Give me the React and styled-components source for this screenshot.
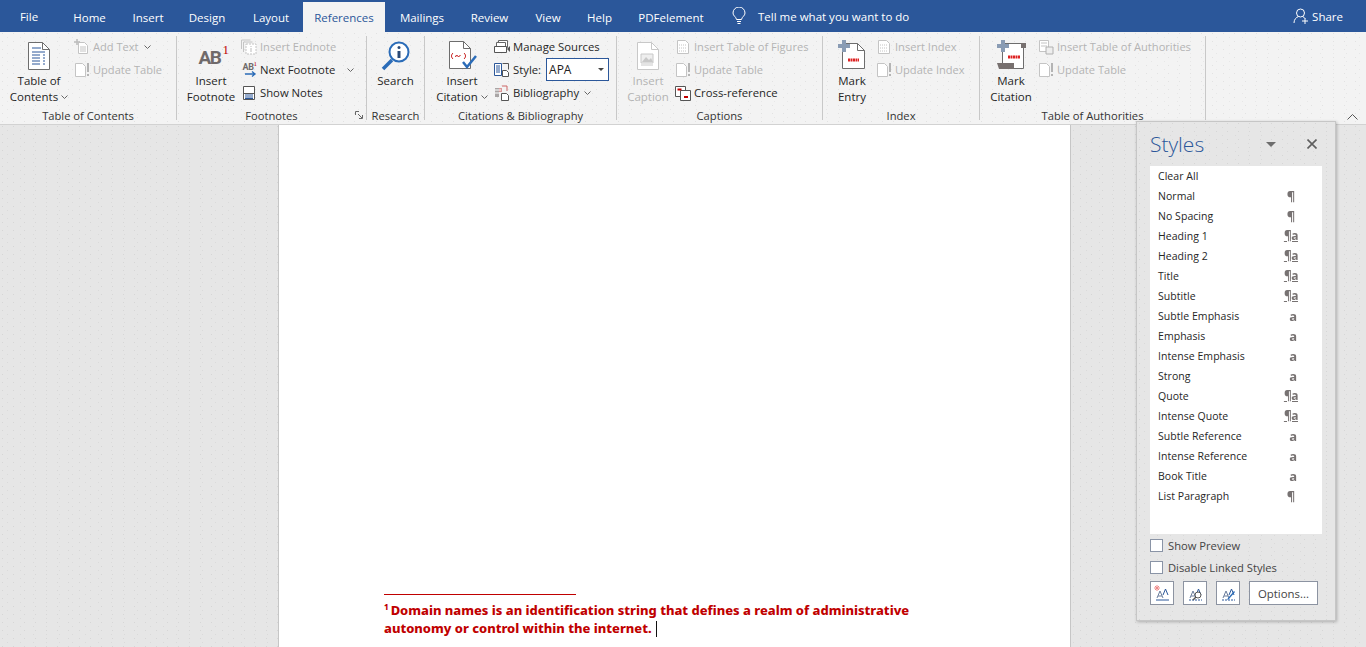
import React from 'react';
import styled, { createGlobalStyle, css } from 'styled-components';

const GlobalStyle = createGlobalStyle`
  html, body {
    margin: 0;
    padding: 0;
    height: 100%;
    overflow: hidden;
    background: #e6e6e6;
  }
  * { box-sizing: border-box; }
  #root { height: 100%; }
`;

// the grainy dots that sit on the grey areas of the screenshot
const dots = css`
  background-image:
    radial-gradient(circle at 0.5px 0.5px, rgba(0, 0, 0, 0.07) 0.7px, transparent 0.8px),
    radial-gradient(circle at 0.5px 0.5px, rgba(0, 0, 0, 0.05) 0.7px, transparent 0.8px);
  background-size: 11px 8px, 13px 8px;
  background-position: 2px 1px, 7px 5px;
`;

const Shell = styled.div`
  position: relative;
  width: 1366px;
  height: 647px;
  overflow: hidden;
  display: flex;
  flex-direction: column;
  font-family: "Open Sans", "Liberation Sans", sans-serif;
  font-size: 11.5px;
  color: #262626;
`;

const TitleBar = styled.div`
  height: 32px;
  background: #2b579a;
  display: flex;
  align-items: flex-end;
  color: #fff;
  flex: none;
`;

const Tab = styled.div`
  width: ${p => p.$w}px;
  height: ${p => (p.$active ? 30 : 32)}px;
  display: flex;
  align-items: center;
  justify-content: center;
  background: ${p => (p.$active ? '#f3f3f3' : 'transparent')};
  color: ${p => (p.$active ? '#2b579a' : '#fff')};
  padding-top: ${p => (p.$active ? 1 : p.$raised ? 1 : 3)}px;
`;

const TellMe = styled.div`
  height: 32px;
  margin-left: 13px;
  display: flex;
  align-items: center;
  gap: 12px;
`;

const ShareBox = styled.div`
  height: 32px;
  margin-left: auto;
  margin-right: 23px;
  display: flex;
  align-items: center;
  gap: 3px;
`;

const Ribbon = styled.div`
  height: 93px;
  flex: none;
  position: relative;
  display: flex;
  background-color: #f3f3f3;
  ${dots}
  border-bottom: 1px solid #d2d2d2;
  padding-top: 4px;
`;

const Group = styled.div`
  width: ${p => p.$w}px;
  height: 84px;
  display: flex;
  flex-direction: column;
  border-right: 1px solid #c8c8c8;
  flex: none;
`;

const GroupBody = styled.div`
  flex: 1;
  display: flex;
  padding-left: ${p => p.$left || 0}px;
  min-height: 0;
`;

const GroupLabel = styled.div`
  height: 15px;
  line-height: 15px;
  margin-bottom: -3px;
  text-align: center;
  font-size: 11.2px;
  color: #333;
  position: relative;
  white-space: nowrap;
`;

const Launcher = styled.svg`
  position: absolute;
  right: 3px;
  top: 3px;
`;

const LargeButton = styled.div`
  width: ${p => p.$w}px;
  display: flex;
  flex-direction: column;
  align-items: center;
  flex: none;
  color: ${p => (p.$off ? '#b4b4b4' : '#262626')};
`;

const LargeIcon = styled.div`
  height: 33px;
  margin-top: 3px;
  display: flex;
  align-items: center;
  justify-content: center;
`;

const LargeText = styled.div`
  text-align: center;
  line-height: 16px;
  margin-top: 1px;
  white-space: nowrap;
`;

const SmallColumn = styled.div`
  display: flex;
  flex-direction: column;
  margin-left: ${p => p.$left || 0}px;
  flex: none;
`;

const SmallRow = styled.div`
  height: 23px;
  display: flex;
  align-items: center;
  gap: 3px;
  white-space: nowrap;
  padding-bottom: 2px;
  font-size: ${p => (p.$off ? 11.1 : 11.3)}px;
  color: ${p => (p.$off ? '#b4b4b4' : '#262626')};
`;

const SmallIcon = styled.div`
  position: relative;
  width: 16px;
  height: 16px;
  flex: none;
  display: flex;
  align-items: center;
  justify-content: center;
`;

const Combo = styled.div`
  width: 63px;
  height: 23px;
  margin-left: 2px;
  background: #fff;
  border: 1px solid #2b579a;
  display: flex;
  align-items: center;
  justify-content: space-between;
  padding: 0 4px 0 2px;
  font-size: 12px;
  color: #222;
`;

const ComboArrow = styled.span`
  width: 0;
  height: 0;
  border-left: 3px solid transparent;
  border-right: 3px solid transparent;
  border-top: 3px solid #444;
`;

const ChevronMark = styled.svg`
  margin-left: ${p => p.$left ?? 3}px;
  vertical-align: 2px;
  flex: none;
`;

const Collapse = styled.svg`
  position: absolute;
  right: 8px;
  bottom: 4px;
`;

// letters inside the footnote buttons, kept as real text
const FootnoteLetters = styled.span`
  position: relative;
  display: inline-block;
  font-family: Roboto, "Open Sans", sans-serif;
  font-weight: 700;
  font-size: ${p => (p.$small ? 9 : 19)}px;
  line-height: 1;
  letter-spacing: ${p => (p.$small ? -0.5 : -1.5)}px;
  color: #6f6a6a;
  margin-top: ${p => (p.$small ? -4 : 4)}px;
  margin-right: ${p => (p.$small ? 2 : 3)}px;
`;

const FootnoteDigit = styled.span`
  position: absolute;
  left: calc(100% + ${p => (p.$small ? 0 : 2)}px);
  top: ${p => (p.$small ? -2 : -5)}px;
  font-family: "Liberation Serif", serif;
  font-weight: 400;
  letter-spacing: 0;
  font-size: ${p => (p.$small ? 7 : 13)}px;
  color: #c00000;
`;

const NextArrowMark = styled.svg`
  position: absolute;
  left: 4px;
  top: 9px;
`;

const Workspace = styled.div`
  flex: 1;
  min-height: 0;
  background-color: #e6e6e6;
  ${dots}
  padding-left: 278px;
`;

const Page = styled.div`
  width: 793px;
  height: 100%;
  background: #fff;
  border-left: 1px solid #c6c6c6;
  border-right: 1px solid #c6c6c6;
  padding: 0 105px 10px;
  display: flex;
  flex-direction: column;
  justify-content: flex-end;
`;

const FootRule = styled.div`
  width: 192px;
  height: 1px;
  background: #c00000;
  margin-bottom: 6px;
`;

const FootLine = styled.div`
  color: #c00000;
  font-family: "Noto Sans", "Open Sans", sans-serif;
  font-weight: 800;
  font-size: 12.95px;
  line-height: 18px;
  white-space: nowrap;
`;

const Sup = styled.sup`
  font-size: 8px;
  line-height: 0;
  margin-right: 2px;
`;

const Caret = styled.span`
  display: inline-block;
  width: 1px;
  height: 16px;
  background: #111;
  margin-left: 4px;
  vertical-align: -4px;
`;

const Pane = styled.aside`
  position: absolute;
  left: 1136px;
  top: 121px;
  width: 200px;
  height: 500px;
  background-color: #e6e6e6;
  ${dots}
  border: 1px solid #c6c6c6;
  box-shadow: 1px 1px 3px rgba(0, 0, 0, 0.25);
  padding: 0 13px;
  display: flex;
  flex-direction: column;
`;

const PaneHeader = styled.div`
  height: 44px;
  display: flex;
  align-items: center;
  color: #2b579a;
  font-size: 21px;
  font-weight: 300;
  padding-right: 5px;
  flex: none;
`;

const PaneTitle = styled.div`
  flex: 1;
`;

const PaneMenu = styled.span`
  width: 0;
  height: 0;
  border-left: 5px solid transparent;
  border-right: 5px solid transparent;
  border-top: 5px solid #6d6d6d;
  margin-right: 31px;
`;

const StyleList = styled.div`
  width: 172px;
  height: 368px;
  background: #fff;
  flex: none;
`;

const StyleRow = styled.div`
  height: 20px;
  display: flex;
  align-items: center;
  justify-content: space-between;
  padding: 0 24px 0 8px;
  font-size: 10.5px;
  letter-spacing: 0.05px;
  color: #262626;
`;

const StyleMark = styled.span`
  width: 14px;
  display: flex;
  justify-content: ${p => (p.$para ? 'center' : 'flex-end')};
  padding-right: ${p => (p.$single ? 1 : 0)}px;
  font-size: ${p => (p.$para || p.$single ? 13 : 12)}px;
  font-weight: 700;
  line-height: 1;
  letter-spacing: ${p => (p.$para || p.$single ? 0 : -0.5)}px;
  color: #777272;
  text-decoration: ${p => (p.$under ? 'underline' : 'none')};
  will-change: transform;
`;

const CheckRow = styled.div`
  height: 22px;
  display: flex;
  align-items: center;
  gap: 5px;
  font-size: 11.2px;
  color: #444;
  flex: none;
`;

const CheckBox = styled.span`
  width: 13px;
  height: 13px;
  background: #fff;
  border: 1px solid #8a94a6;
  flex: none;
`;

const PaneFooter = styled.div`
  display: flex;
  gap: 9px;
  margin-top: 3px;
`;

const PaneButton = styled.div`
  width: ${p => p.$w || 24}px;
  height: 24px;
  background: #fff;
  border: 1px solid #8c93a1;
  display: flex;
  align-items: center;
  justify-content: center;
  font-size: 11.4px;
  color: #444;
`;

const Svg = ({ w = 16, h = 16, children }) => (
  <svg width={w} height={h} viewBox={`0 0 ${w} ${h}`} fill="none">{children}</svg>
);

const Chevron = ({ left }) => (
  <ChevronMark $left={left} width="7" height="4" viewBox="0 0 7 4" fill="none">
    <path d="M.5.5l3 3 3-3" stroke="#666" />
  </ChevronMark>
);

const DocAlert = () => (
  <Svg>
    <path d="M1.500 1.500h7l3 3v10h-10z" stroke="#c4c4c4" fill="#fff" />
    <path d="M14 1v9M14 12v2" stroke="#b4b4b4" strokeWidth="2" />
  </Svg>
);

const LargeDoc = ({ children, x = 5, stroke = '#6d6d6d' }) => (
  <Svg w={32} h={32}>
    <path d={`M${x + .5} 2.500h14l7 7v20h-21z`} stroke={stroke} fill="#fff" />
    <path d={`M${x + 14.5} 2.500v7h7`} stroke={stroke} />
    {children}
  </Svg>
);

const TocIcon = () => (
  <LargeDoc>
    <path d="M9 8h9" stroke="#2b579a" />
    <path d="M9 12h13M9 15h8M20 15h2M9 18h8M20 18h2M9 21h8M20 21h2M9 24h8M20 24h2" stroke="#2b579a" />
  </LargeDoc>
);

const NextArrow = () => (
  <NextArrowMark width="12" height="6" viewBox="0 0 12 6" fill="none">
    <path d="M0 3h10M7 .5L10 3 7 5.500" stroke="#2b6cb8" strokeWidth="1.300" />
  </NextArrowMark>
);

const ShowNotesIcon = () => (
  <Svg>
    <path d="M2.500 1.500h11v13h-11z" stroke="#555" fill="#fff" />
    <path d="M2.500 8.500h11" stroke="#555" />
    <path d="M4 10h8M4 12h8M4 13.500h8" stroke="#2b579a" />
  </Svg>
);

const SearchIcon = () => (
  <Svg w={32} h={32}>
    <circle cx="19" cy="12" r="9.500" stroke="#2b6cb8" strokeWidth="2" fill="#fff" />
    <path d="M12 20L3 29" stroke="#2b6cb8" strokeWidth="3.500" />
    <circle cx="19" cy="7.500" r="1.500" fill="#2b4a77" />
    <path d="M19 11v7" stroke="#2b4a77" strokeWidth="3" />
  </Svg>
);

const CitationIcon = () => (
  <Svg w={32} h={32}>
    <path d="M3.500 1.500h14l7 7v20h-21z" stroke="#6d6d6d" fill="#fff" />
    <path d="M17.500 1.500v7h7" stroke="#6d6d6d" />
    <path d="M7 13c-2 2-2 4 0 6M18 13c2 2 2 4 0 6" stroke="#c00000" />
    <path d="M9 16.500l2-1 1.500 1 2-1" stroke="#c00000" />
    <path d="M17 22l4 5 9-11" stroke="#2b6cb8" strokeWidth="2.500" />
  </Svg>
);

const SourcesIcon = () => (
  <Svg>
    <path d="M4.500 1.500h9v7h-9z" stroke="#666" fill="#fff" />
    <path d="M2.500 3.500h9v7h-9z" stroke="#666" fill="#fff" />
    <path d="M.5 7.500h12v6H.5z" stroke="#555" fill="#fff" />
    <path d="M13 10l3-3v6z" fill="#555" />
  </Svg>
);

const StyleIcon = () => (
  <Svg>
    <path d="M.5 1.500h7v12h-7z" stroke="#2b579a" fill="#fff" />
    <path d="M2 4h4M2 6h4M2 8h4M2 10h4" stroke="#2b579a" />
    <path d="M8.500 1.500h6v6" stroke="#555" />
    <path d="M8.500 8.500h4l2 2v4h-6z" stroke="#555" fill="#fff" />
  </Svg>
);

const BibliographyIcon = () => (
  <Svg>
    <path d="M1 3h4v9H1z" fill="#a9a5a5" />
    <path d="M5 3h3v4H5z" fill="#d99" />
    <path d="M1 5h6M1 8h4" stroke="#fff" />
    <path d="M8 1h5v5" stroke="#c66" />
    <path d="M7.500 8.500h5l2 2v5h-7z" stroke="#555" fill="#fff" />
  </Svg>
);

const CaptionIcon = () => (
  <LargeDoc stroke="#c8c8c8">
    <path d="M9 14h12v9H9z" stroke="#c8c8c8" fill="#eee" />
    <path d="M10 22l4-5 3 3 2-2 2 4z" fill="#c8c8c8" />
    <path d="M9 25h12" stroke="#c8c8c8" />
  </LargeDoc>
);

const CrossRefIcon = () => (
  <Svg>
    <path d="M.5 1.500h10v10H.5z" stroke="#555" fill="#fff" />
    <path d="M5.500 5.500h10v10h-10z" stroke="#555" fill="#fff" />
    <path d="M2.500 4.500h4" stroke="#c00000" strokeWidth="2" />
    <path d="M9 12h4" stroke="#c00000" strokeWidth="2" />
  </Svg>
);

const MarkEntryIcon = () => (
  <Svg w={32} h={32}>
    <path d="M6.500 3.500h15l7 7v18h-22z" stroke="#6d6d6d" fill="#fff" />
    <path d="M21.500 3.500v7h7" stroke="#6d6d6d" />
    <path d="M6 0h4v4h4v4h-4v4H6V8H2V4h4z" fill="#8a9cb4" />
    <path d="M12 20h11" stroke="#d22" strokeWidth="3" strokeDasharray="2 .5" />
  </Svg>
);

const MarkCitationIcon = () => (
  <Svg w={32} h={32}>
    <path d="M7.500 3.500h21v25h-21z" stroke="#6d6d6d" fill="#fff" />
    <path d="M26 3h5v5h-5z" fill="#77706f" />
    <path d="M2 23h17v6H4z" fill="#77706f" />
    <path d="M6 0h4v4h4v4h-4v4H6V8H2V4h4z" fill="#8a9cb4" />
    <path d="M13 17h12" stroke="#d22" strokeWidth="3" strokeDasharray="2 .5" />
  </Svg>
);

const TableFiguresIcon = () => (
  <Svg>
    <path d="M2.500 1.500h8l3 3v10h-11z" stroke="#c4c4c4" fill="#fff" />
    <path d="M4 6h8M4 9h8M4 12h8" stroke="#c4c4c4" strokeDasharray="1 1" />
  </Svg>
);

const AddTextIcon = () => (
  <Svg>
    <path d="M4.500 3.500h6l3 3v8h-9z" stroke="#c4c4c4" fill="#fff" />
    <path d="M6 8h6M6 10h6M6 12h6" stroke="#c4c4c4" />
    <path d="M3 0v6M0 3h6" stroke="#bbb" strokeWidth="1.500" />
  </Svg>
);

const EndnoteIcon = () => (
  <Svg>
    <path d="M.5 1h9M.5 1v9M2.500 3h9M2.500 3v10" stroke="#c4c4c4" />
    <path d="M5 5h10v10H5z" stroke="#c4c4c4" fill="#fff" strokeDasharray="2 1" />
    <path d="M10 7v1M10 9v4" stroke="#bbb" />
  </Svg>
);

const AuthoritiesIcon = () => (
  <Svg>
    <path d="M1.500 1.500h9v11h-9z" stroke="#c4c4c4" fill="#fff" />
    <path d="M3 4h6M3 7h6" stroke="#c4c4c4" />
    <path d="M8 8h7v7H8z" stroke="#b0b0b0" fill="#eee" />
  </Svg>
);

const LightBulb = () => (
  <Svg w={14} h={18}>
    <path d="M4.500 12.500C4 9.500 1 9 1 6a6 6 0 0 1 12 0c0 3-3 3.500-3.500 6.500z" stroke="#fff" />
    <path d="M5 14.500h4M5.500 16.500h3" stroke="#fff" />
  </Svg>
);

const PersonIcon = () => (
  <Svg>
    <circle cx="7.500" cy="5" r="4" stroke="#fff" />
    <path d="M1 15c0-3.500 2-5.500 4.500-6.500M9.500 8.500c1 .4 2 1 2.500 2" stroke="#fff" />
    <path d="M9 13h6M12 10v6" stroke="#fff" />
  </Svg>
);

const CloseIcon = () => (
  <svg width="10" height="10" viewBox="0 0 10 10">
    <path d="M.5.5l9 9M9.500.5l-9 9" stroke="#5f5f5f" strokeWidth="1.600" />
  </svg>
);

const StyleGlyph = ({ sparkle, tool }) => (
  <svg width="18" height="18" viewBox="0 0 18 18" fill="none">
    {sparkle && <path d="M4 1v6M1 4h6M2 2l4 4M6 2L2 6" stroke="#e88" />}
    <path d="M4 14l3-7 3 7M5 12h4" stroke="#6a7d9c" />
    <path d="M10 11l2.500-6 2.500 6" stroke="#2b579a" />
    <path d="M3 16h13" stroke="#2b579a" strokeDasharray={sparkle ? '' : '2 1'} />
    {tool === 'lens' && <circle cx="12" cy="11" r="3" stroke="#555" fill="#fff" />}
    {tool === 'lens' && <path d="M10 13l-3 3" stroke="#555" strokeWidth="1.500" />}
    {tool === 'pen' && <path d="M15 7l-6 7-1 2 2-1 6-7z" fill="#2b6cb8" />}
  </svg>
);

const tabs = [
  { name: 'File', w: 58, raised: true }, { name: 'Home', w: 63 }, { name: 'Insert', w: 54 },
  { name: 'Design', w: 64 }, { name: 'Layout', w: 64 }, { name: 'References', w: 82, active: true },
  { name: 'Mailings', w: 74 }, { name: 'Review', w: 61 }, { name: 'View', w: 56 },
  { name: 'Help', w: 47 }, { name: 'PDFelement', w: 96 },
];

const styleRows = [
  ['Clear All', ''], ['Normal', '¶'], ['No Spacing', '¶'], ['Heading 1', '¶a', true], ['Heading 2', '¶a', true],
  ['Title', '¶a', true], ['Subtitle', '¶a', true], ['Subtle Emphasis', 'a'], ['Emphasis', 'a'],
  ['Intense Emphasis', 'a'], ['Strong', 'a'], ['Quote', '¶a', true], ['Intense Quote', '¶a', true],
  ['Subtle Reference', 'a'], ['Intense Reference', 'a'], ['Book Title', 'a'], ['List Paragraph', '¶'],
];

export default function App() {
  return (
    <Shell>
      <GlobalStyle />
      <TitleBar>
        {tabs.map(t => (
          <Tab key={t.name} $w={t.w} $active={t.active} $raised={t.raised}>{t.name}</Tab>
        ))}
        <TellMe>
          <LightBulb />
          <span>Tell me what you want to do</span>
        </TellMe>
        <ShareBox>
          <PersonIcon />
          <span>Share</span>
        </ShareBox>
      </TitleBar>

      <Ribbon>
        <Group $w={177}>
          <GroupBody $left={7}>
            <LargeButton $w={64}>
              <LargeIcon><TocIcon /></LargeIcon>
              <LargeText>Table of<br />Contents<Chevron /></LargeText>
            </LargeButton>
            <SmallColumn $left={3}>
              <SmallRow $off><SmallIcon><AddTextIcon /></SmallIcon>Add Text<Chevron left={2} /></SmallRow>
              <SmallRow $off><SmallIcon><DocAlert /></SmallIcon>Update Table</SmallRow>
            </SmallColumn>
          </GroupBody>
          <GroupLabel>Table of Contents</GroupLabel>
        </Group>

        <Group $w={190}>
          <GroupBody $left={9}>
            <LargeButton $w={50}>
              <LargeIcon>
                <FootnoteLetters>AB<FootnoteDigit>1</FootnoteDigit></FootnoteLetters>
              </LargeIcon>
              <LargeText>Insert<br />Footnote</LargeText>
            </LargeButton>
            <SmallColumn $left={5}>
              <SmallRow $off><SmallIcon><EndnoteIcon /></SmallIcon>Insert Endnote</SmallRow>
              <SmallRow>
                <SmallIcon>
                  <FootnoteLetters $small>AB<FootnoteDigit $small>1</FootnoteDigit></FootnoteLetters>
                  <NextArrow />
                </SmallIcon>
                Next Footnote
                <Chevron left={9} />
              </SmallRow>
              <SmallRow><SmallIcon><ShowNotesIcon /></SmallIcon>Show Notes</SmallRow>
            </SmallColumn>
          </GroupBody>
          <GroupLabel>
            Footnotes
            <Launcher width="8" height="8" viewBox="0 0 8 8" fill="none">
              <path d="M.5 4V.5H4M3 3l4 4M4 7.500h3.500V4" stroke="#666" />
            </Launcher>
          </GroupLabel>
        </Group>

        <Group $w={58}>
          <GroupBody>
            <LargeButton $w={57}>
              <LargeIcon><SearchIcon /></LargeIcon>
              <LargeText>Search</LargeText>
            </LargeButton>
          </GroupBody>
          <GroupLabel>Research</GroupLabel>
        </Group>

        <Group $w={192}>
          <GroupBody $left={7}>
            <LargeButton $w={60}>
              <LargeIcon><CitationIcon /></LargeIcon>
              <LargeText>Insert<br />Citation<Chevron /></LargeText>
            </LargeButton>
            <SmallColumn $left={2}>
              <SmallRow><SmallIcon><SourcesIcon /></SmallIcon>Manage Sources</SmallRow>
              <SmallRow>
                <SmallIcon><StyleIcon /></SmallIcon>Style:
                <Combo>APA<ComboArrow /></Combo>
              </SmallRow>
              <SmallRow><SmallIcon><BibliographyIcon /></SmallIcon>Bibliography<Chevron left={2} /></SmallRow>
            </SmallColumn>
          </GroupBody>
          <GroupLabel>Citations &amp; Bibliography</GroupLabel>
        </Group>

        <Group $w={206}>
          <GroupBody $left={6}>
            <LargeButton $w={50} $off>
              <LargeIcon><CaptionIcon /></LargeIcon>
              <LargeText>Insert<br />Caption</LargeText>
            </LargeButton>
            <SmallColumn $left={2}>
              <SmallRow $off><SmallIcon><TableFiguresIcon /></SmallIcon>Insert Table of Figures</SmallRow>
              <SmallRow $off><SmallIcon><DocAlert /></SmallIcon>Update Table</SmallRow>
              <SmallRow><SmallIcon><CrossRefIcon /></SmallIcon>Cross-reference</SmallRow>
            </SmallColumn>
          </GroupBody>
          <GroupLabel>Captions</GroupLabel>
        </Group>

        <Group $w={157}>
          <GroupBody $left={9}>
            <LargeButton $w={40}>
              <LargeIcon><MarkEntryIcon /></LargeIcon>
              <LargeText>Mark<br />Entry</LargeText>
            </LargeButton>
            <SmallColumn $left={4}>
              <SmallRow $off><SmallIcon><TableFiguresIcon /></SmallIcon>Insert Index</SmallRow>
              <SmallRow $off><SmallIcon><DocAlert /></SmallIcon>Update Index</SmallRow>
            </SmallColumn>
          </GroupBody>
          <GroupLabel>Index</GroupLabel>
        </Group>

        <Group $w={226}>
          <GroupBody $left={6}>
            <LargeButton $w={50}>
              <LargeIcon><MarkCitationIcon /></LargeIcon>
              <LargeText>Mark<br />Citation</LargeText>
            </LargeButton>
            <SmallColumn $left={2}>
              <SmallRow $off><SmallIcon><AuthoritiesIcon /></SmallIcon>Insert Table of Authorities</SmallRow>
              <SmallRow $off><SmallIcon><DocAlert /></SmallIcon>Update Table</SmallRow>
            </SmallColumn>
          </GroupBody>
          <GroupLabel>Table of Authorities</GroupLabel>
        </Group>

        <Collapse width="11" height="6" viewBox="0 0 11 6" fill="none">
          <path d="M.5 5.500l5-5 5 5" stroke="#555" />
        </Collapse>
      </Ribbon>

      <Workspace>
        <Page>
          <FootRule />
          <FootLine><Sup>1</Sup>Domain names is an identification string that defines a realm of administrative</FootLine>
          <FootLine>autonomy or control within the internet.<Caret /></FootLine>
        </Page>
      </Workspace>

      <Pane>
        <PaneHeader>
          <PaneTitle>Styles</PaneTitle>
          <PaneMenu />
          <CloseIcon />
        </PaneHeader>
        <StyleList>
          {styleRows.map(([name, mark, under]) => (
            <StyleRow key={name}>
              <span>{name}</span>
              <StyleMark $under={under} $para={mark === '¶'} $single={mark === 'a'}>{mark}</StyleMark>
            </StyleRow>
          ))}
        </StyleList>
        <CheckRow><CheckBox />Show Preview</CheckRow>
        <CheckRow><CheckBox />Disable Linked Styles</CheckRow>
        <PaneFooter>
          <PaneButton><StyleGlyph sparkle /></PaneButton>
          <PaneButton><StyleGlyph tool="lens" /></PaneButton>
          <PaneButton><StyleGlyph tool="pen" /></PaneButton>
          <PaneButton $w={69}>Options...</PaneButton>
        </PaneFooter>
      </Pane>
    </Shell>
  );
}
